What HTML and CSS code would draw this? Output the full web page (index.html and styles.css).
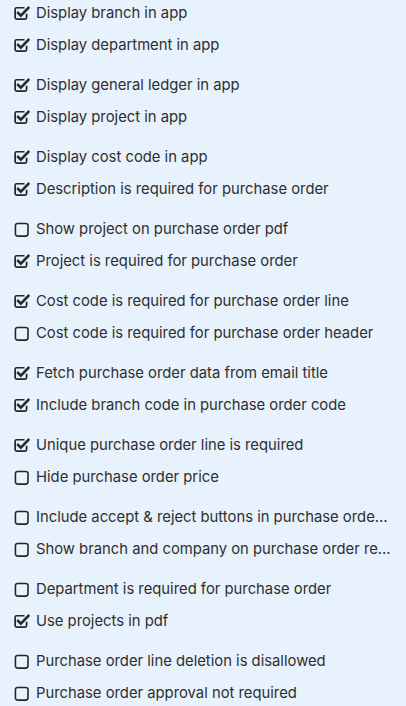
FILE: index.html
```html
<!DOCTYPE html>
<html lang="en">
<head>
<meta charset="utf-8">
<title>Purchase order settings</title>
<link rel="stylesheet" href="styles.css">
</head>
<body>
<svg class="defs" width="0" height="0" aria-hidden="true">
  <symbol id="box-on" viewBox="0 0 14 14">
    <path d="M11 7.6v3.4a1.4 1.4 0 0 1-1.4 1.4H2.4A1.4 1.4 0 0 1 1 11V3.8a1.4 1.4 0 0 1 1.4-1.4h6.8" fill="none" stroke="currentColor" stroke-width="1.5"/>
    <path d="M3.6 6.9l2.4 2.4 6.6-6.8" fill="none" stroke="currentColor" stroke-width="2.2" stroke-linecap="square"/>
  </symbol>
  <symbol id="box-off" viewBox="0 0 14 14">
    <rect x="1.25" y="2.25" width="11" height="11" rx="2" fill="none" stroke="currentColor" stroke-width="1.4"/>
  </symbol>
</svg>
<main class="settings">
  <div class="group">
    <label class="opt"><svg class="ico"><use href="#box-on"/></svg><span class="txt">Display branch in app</span></label>
    <label class="opt"><svg class="ico"><use href="#box-on"/></svg><span class="txt">Display department in app</span></label>
  </div>
  <div class="group">
    <label class="opt"><svg class="ico"><use href="#box-on"/></svg><span class="txt">Display general ledger in app</span></label>
    <label class="opt"><svg class="ico"><use href="#box-on"/></svg><span class="txt">Display project in app</span></label>
  </div>
  <div class="group">
    <label class="opt"><svg class="ico"><use href="#box-on"/></svg><span class="txt">Display cost code in app</span></label>
    <label class="opt"><svg class="ico"><use href="#box-on"/></svg><span class="txt">Description is required for purchase order</span></label>
  </div>
  <div class="group">
    <label class="opt"><svg class="ico"><use href="#box-off"/></svg><span class="txt">Show project on purchase order pdf</span></label>
    <label class="opt"><svg class="ico"><use href="#box-on"/></svg><span class="txt">Project is required for purchase order</span></label>
  </div>
  <div class="group">
    <label class="opt"><svg class="ico"><use href="#box-on"/></svg><span class="txt">Cost code is required for purchase order line</span></label>
    <label class="opt"><svg class="ico"><use href="#box-off"/></svg><span class="txt">Cost code is required for purchase order header</span></label>
  </div>
  <div class="group">
    <label class="opt"><svg class="ico"><use href="#box-on"/></svg><span class="txt">Fetch purchase order data from email title</span></label>
    <label class="opt"><svg class="ico"><use href="#box-on"/></svg><span class="txt">Include branch code in purchase order code</span></label>
  </div>
  <div class="group">
    <label class="opt"><svg class="ico"><use href="#box-on"/></svg><span class="txt">Unique purchase order line is required</span></label>
    <label class="opt"><svg class="ico"><use href="#box-off"/></svg><span class="txt">Hide purchase order price</span></label>
  </div>
  <div class="group">
    <label class="opt"><svg class="ico"><use href="#box-off"/></svg><span class="txt">Include accept &amp; reject buttons in purchase order email</span></label>
    <label class="opt"><svg class="ico"><use href="#box-off"/></svg><span class="txt">Show branch and company on purchase order report</span></label>
  </div>
  <div class="group">
    <label class="opt"><svg class="ico"><use href="#box-off"/></svg><span class="txt">Department is required for purchase order</span></label>
    <label class="opt"><svg class="ico"><use href="#box-on"/></svg><span class="txt">Use projects in pdf</span></label>
  </div>
  <div class="group">
    <label class="opt"><svg class="ico"><use href="#box-off"/></svg><span class="txt">Purchase order line deletion is disallowed</span></label>
    <label class="opt"><svg class="ico"><use href="#box-off"/></svg><span class="txt">Purchase order approval not required</span></label>
  </div>
</main>
</body>
</html>
```

FILE: styles.css
```css
html, body {
  margin: 0;
  background: #e8f2fd;
}

body {
  font-family: Inter, "Noto Sans", sans-serif;
  font-size: 14.8px;
  color: #2e2e2e;
  overflow: hidden;
}

.defs {
  position: absolute;
  width: 0;
  height: 0;
}

.settings {
  display: flex;
  flex-direction: column;
  gap: 16px;
  padding: 1px 14px 0 14px;
}

.group {
  display: flex;
  flex-direction: column;
  gap: 8px;
}

.opt {
  display: flex;
  align-items: center;
  gap: 6px;
  height: 24px;
  min-width: 0;
}

.ico {
  flex: none;
  width: 16px;
  height: 16px;
  color: #262626;
}

.txt {
  white-space: nowrap;
  overflow: hidden;
  text-overflow: ellipsis;
  min-width: 0;
}
```
